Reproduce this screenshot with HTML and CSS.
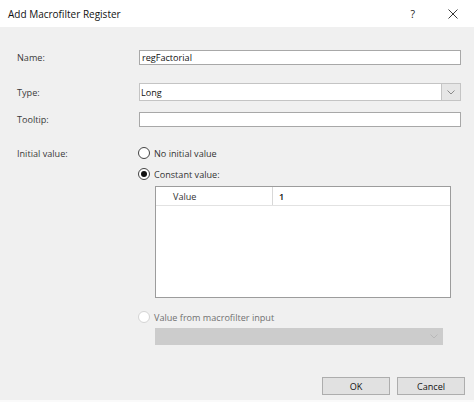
FILE: index.html
```html
<!DOCTYPE html>
<html>
<head>
<meta charset="utf-8">
<link rel="stylesheet" href="styles.css">
</head>
<body>
<div class="dialog">
  <div class="titlebar">
    <span class="title">Add Macrofilter Register</span>
    <span class="help">?</span>
    <svg class="close" width="10" height="10" viewBox="0 0 10 10"><path d="M0.5 0.5 L9.5 9.5 M9.5 0.5 L0.5 9.5" stroke="#222" stroke-width="0.9" fill="none"/></svg>
  </div>
  <div class="content">
    <div class="row r-name">
      <span class="label">Name:</span>
      <div class="input">regFactorial</div>
    </div>
    <div class="row r-type">
      <span class="label">Type:</span>
      <div class="combo">
        <span class="combo-text">Long</span>
        <span class="combo-btn"><svg width="8" height="5" viewBox="0 0 8 5"><path d="M0.5 0.5 L4 4 L7.5 0.5" stroke="#8a8a8a" stroke-width="1" fill="none"/></svg></span>
      </div>
    </div>
    <div class="row r-tooltip">
      <span class="label">Tooltip:</span>
      <div class="input"></div>
    </div>
    <div class="row r-init">
      <span class="label">Initial value:</span>
      <div class="radio-line"><span class="radio"></span><span class="rtext">No initial value</span></div>
    </div>
    <div class="row r-const">
      <span class="label"></span>
      <div class="radio-line"><span class="radio checked"></span><span class="rtext">Constant value:</span></div>
    </div>
    <div class="row r-grid">
      <span class="label"></span>
      <div class="grid">
        <div class="grid-head">
          <div class="cell c-name">Value</div>
          <div class="cell c-val">1</div>
        </div>
      </div>
    </div>
    <div class="row r-from">
      <span class="label"></span>
      <div class="radio-line disabled"><span class="radio"></span><span class="rtext">Value from macrofilter input</span></div>
    </div>
    <div class="row r-dis">
      <span class="label"></span>
      <div class="combo-dis"><svg width="8" height="5" viewBox="0 0 8 5"><path d="M0.5 0.5 L4 4 L7.5 0.5" stroke="#b8b8b8" stroke-width="1" fill="none"/></svg></div>
    </div>
    <div class="buttons">
      <div class="btn">OK</div>
      <div class="btn">Cancel</div>
    </div>
  </div>
  <div class="bottom"></div>
</div>
</body>
</html>
```
FILE: styles.css
```css
html, body {
  margin: 0;
  padding: 0;
  background: #f0f0f0;
}
.dialog {
  width: 474px;
  height: 402px;
  display: flex;
  flex-direction: column;
  font-family: "Open Sans", "Noto Sans", sans-serif;
  font-size: 9.1px;
  color: #333;
  overflow: hidden;
}
.titlebar {
  height: 27px;
  background: #fff;
  display: flex;
  align-items: center;
  padding-left: 8px;
  flex: none;
}
.title {
  font-size: 10px;
  color: #111;
  flex: 1;
}
.help {
  font-size: 10.5px;
  color: #222;
  margin-right: 33px;
}
.close {
  margin-right: 16px;
}
.content {
  flex: 1;
  padding: 23px 13px 0 17px;
  display: flex;
  flex-direction: column;
}
.row {
  display: grid;
  grid-template-columns: 122px 1fr;
  align-items: center;
}
.label {
  color: #3a3a3a;
}
.input {
  height: 13px;
  border: 1px solid #a8a8a8;
  background: #fff;
  padding-left: 2px;
  line-height: 13px;
  color: #111;
}
.r-type { margin-top: 18px; }
.r-tooltip { margin-top: 11px; }
.combo {
  height: 16px;
  border: 1px solid #c4c4c4;
  background: #fff;
  display: flex;
  align-items: center;
}
.combo-text {
  flex: 1;
  padding-left: 1px;
  color: #111;
}
.combo-btn {
  width: 18px;
  height: 16px;
  background: #e6e6e6;
  border-left: 1px solid #c4c4c4;
  display: flex;
  align-items: center;
  justify-content: center;
}
.r-init { margin-top: 18px; height: 16px; }
.r-const { margin-top: 5px; height: 16px; }
.radio-line {
  display: flex;
  align-items: center;
  margin-left: -1px;
}
.radio {
  width: 10px;
  height: 10px;
  border: 1px solid #444;
  border-radius: 50%;
  background: #fff;
  margin-right: 4px;
  display: flex;
  align-items: center;
  justify-content: center;
}
.radio.checked::after {
  content: "";
  width: 6px;
  height: 6px;
  border-radius: 50%;
  background: #111;
}
.rtext { color: #333; }
.disabled .radio {
  border-color: #d4d4d4;
}
.disabled .rtext { color: #707070; }
.r-grid { margin-top: 4px; }
.grid {
  margin-left: 16px;
  margin-right: 10px;
  height: 110px;
  border: 1px solid #9c9c9c;
  background: #fff;
}
.grid-head {
  display: flex;
  height: 18px;
  border-bottom: 1px solid #e2e2e2;
}
.cell {
  display: flex;
  align-items: center;
}
.c-name {
  width: 117px;
  padding-left: 17px;
  box-sizing: border-box;
  border-right: 1px solid #d8d8d8;
  color: #333;
}
.c-val {
  padding-left: 6px;
  font-weight: 600;
  color: #111;
}
.r-from { margin-top: 11px; height: 16px; }
.r-dis { margin-top: 3px; }
.combo-dis {
  margin-left: 16px;
  margin-right: 18px;
  height: 17px;
  background: #cccccc;
  display: flex;
  align-items: center;
  justify-content: flex-end;
  padding-right: 5px;
}
.buttons {
  margin-top: 32px;
  display: flex;
  justify-content: flex-end;
  gap: 7px;
  margin-right: -4px;
}
.btn {
  width: 66px;
  height: 16px;
  border: 1px solid #adadad;
  background: #e1e1e1;
  color: #111;
  display: flex;
  align-items: center;
  justify-content: center;
}
.bottom {
  height: 2px;
  background: #fafafa;
  flex: none;
}
```
